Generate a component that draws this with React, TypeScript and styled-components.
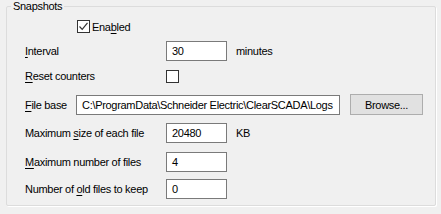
import React from 'react';
import styled, { createGlobalStyle } from 'styled-components';

const GlobalStyle = createGlobalStyle`
  html, body {
    margin: 0;
    padding: 0;
    background: #f0f0f0;
  }
  body {
    font-family: 'Liberation Sans', Arial, sans-serif;
    font-size: 11px;
    letter-spacing: -0.3px;
    color: #000000;
  }
`;

const Page = styled.div`
  width: 441px;
  height: 214px;
  padding: 0 0 0 6px;
  box-sizing: border-box;
  background: #f0f0f0;
`;

const GroupBox = styled.fieldset`
  margin: 0;
  width: 430px;
  height: 206px;
  box-sizing: border-box;
  border: 1px solid #dcdcdc;
  box-shadow: 1px 1px 0 #ffffff;
  border-radius: 2px;
  padding: 0;
`;

const Legend = styled.legend`
  padding: 0 2px;
  margin-left: 4px;
  line-height: 12px;
  font-size: 11px;
`;

const Form = styled.div`
  display: flex;
  flex-direction: column;
  padding-left: 18px;
`;

const Row = styled.div<{ $gap: number; $h?: number }>`
  display: flex;
  align-items: center;
  height: ${(p) => p.$h ?? 20}px;
  margin-top: ${(p) => p.$gap}px;
`;

const Label = styled.span<{ $w?: number }>`
  width: ${(p) => p.$w ?? 141}px;
  flex-shrink: 0;
  white-space: nowrap;
  u {
    text-decoration: underline;
    text-underline-offset: 2px;
  }
`;

const TextBox = styled.div<{ $w?: number }>`
  width: ${(p) => p.$w ?? 61}px;
  height: 20px;
  box-sizing: border-box;
  border: 1px solid #7a7a7a;
  background: #ffffff;
  padding: 0 0 0 5px;
  line-height: 18px;
  white-space: nowrap;
  overflow: hidden;
`;

const Unit = styled.span`
  margin-left: 9px;
`;

const Box = styled.span`
  width: 13px;
  height: 13px;
  box-sizing: border-box;
  border: 1px solid #333333;
  background: #ffffff;
  display: inline-flex;
  align-items: center;
  justify-content: center;
  flex-shrink: 0;
`;

const CheckLabel = styled.label`
  display: flex;
  align-items: center;
  gap: 2px;
  margin-left: 52px;
  u {
    text-decoration: underline;
    text-underline-offset: 2px;
  }
`;

const Button = styled.div`
  width: 73px;
  height: 21px;
  box-sizing: border-box;
  margin-left: 10px;
  border: 1px solid #adadad;
  background: #e1e1e1;
  display: flex;
  align-items: center;
  justify-content: center;
`;

const Check = () => (
  <svg width="11" height="11" viewBox="0 0 11 11">
    <path d="M1.5 5.5 L4.2 8.3 L9.5 1.8" fill="none" stroke="#333333" strokeWidth="1.2" />
  </svg>
);

export default function App() {
  return (
    <Page>
      <GlobalStyle />
      <GroupBox>
        <Legend>Snapshots</Legend>
        <Form>
          <Row $gap={8} $h={13}>
            <CheckLabel>
              <Box>
                <Check />
              </Box>
              <span>
                Ena<u>b</u>led
              </span>
            </CheckLabel>
          </Row>
          <Row $gap={8}>
            <Label>
              <u>I</u>nterval
            </Label>
            <TextBox>30</TextBox>
            <Unit>minutes</Unit>
          </Row>
          <Row $gap={5}>
            <Label>
              <u>R</u>eset counters
            </Label>
            <Box />
          </Row>
          <Row $gap={8} $h={21}>
            <Label $w={51}>
              <u>F</u>ile base
            </Label>
            <TextBox $w={264}>C:\ProgramData\Schneider Electric\ClearSCADA\Logs</TextBox>
            <Button>Browse...</Button>
          </Row>
          <Row $gap={8}>
            <Label>
              Maximum <u>s</u>ize of each file
            </Label>
            <TextBox>20480</TextBox>
            <Unit>KB</Unit>
          </Row>
          <Row $gap={9}>
            <Label>
              <u>M</u>aximum number of files
            </Label>
            <TextBox>4</TextBox>
          </Row>
          <Row $gap={7}>
            <Label>
              Number of <u>o</u>ld files to keep
            </Label>
            <TextBox>0</TextBox>
          </Row>
        </Form>
      </GroupBox>
    </Page>
  );
}
